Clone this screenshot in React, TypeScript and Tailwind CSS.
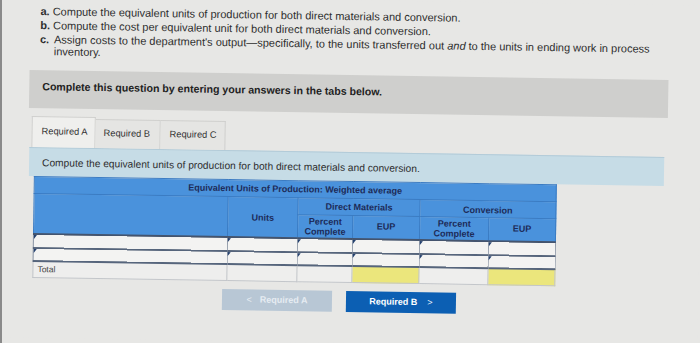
import React from 'react'

const font = { fontFamily: '"Liberation Sans", Arial, sans-serif' }

function Flag() {
  return (
    <span className="absolute left-0 top-0 h-0 w-0 border-t-[4px] border-r-[3px] border-t-[#24406e] border-r-transparent" />
  )
}

function InputCell({ h }: { h: string }) {
  return (
    <td className={`relative ${h} bg-[#f3f3f2] border-x border-[#8893a4] border-y-2 border-y-[#56657c] p-0`}>
      <Flag />
    </td>
  )
}

export default function App() {
  return (
    <div className="w-[700px] h-[343px] overflow-hidden bg-[#e7e7e5] border-l-2 border-[#8a8a8a]">
      {/* the reference is a photo of a screen, tilted slightly */}
      <div
        className="w-[700px] h-[343px] -ml-[2px] rotate-[0.9deg] bg-[#e7e7e5] text-[#2e2e2e]"
        style={font}
      >
        {/* Instructions */}
        <div className="pt-[9px] pl-[38px] text-[11px] leading-[14px]">
          <div>
            <b>a.</b> Compute the equivalent units of production for both direct materials and conversion.
          </div>
          <div>
            <b>b.</b> Compute the cost per equivalent unit for both direct materials and conversion.
          </div>
          <div className="flex leading-[12px] pt-[1px]">
            <b className="w-[14px] shrink-0">c.</b>
            <span className="w-[612px]">
              Assign costs to the department's output—specifically, to the units transferred out <i>and</i> to the units in ending work in process inventory.
            </span>
          </div>
        </div>

        {/* Prompt box */}
        <div className="ml-[28px] mt-[13px] w-[639px] h-[38px] bg-[#cfcfcd] flex items-center pl-[13px] pb-[4px]">
          <span className="text-[10.6px] font-bold text-[#222]">
            Complete this question by entering your answers in the tabs below.
          </span>
        </div>

        {/* Tabs */}
        <div className="ml-[31px] mt-[8px] flex items-end h-[31px] text-[9.3px] text-[#333]">
          <div className="w-[64px] h-[31px] bg-[#efefed] border border-b-0 border-[#d0d0ce] flex items-center pl-[9px]">
            Required A
          </div>
          <div className="w-[65px] h-[29px] bg-[#e5e5e3] border border-b-0 border-l-0 border-[#d0d0ce] flex items-center pl-[8px]">
            Required B
          </div>
          <div className="w-[65px] h-[29px] bg-[#e5e5e3] border border-b-0 border-l-0 border-[#d0d0ce] flex items-center pl-[9px]">
            Required C
          </div>
        </div>

        {/* Sub prompt */}
        <div className="ml-[29px] w-[635px] h-[29px] bg-[#c6dce6] border-t border-[#b3cbd8] flex items-center pl-[13px] pt-[1px]">
          <span className="text-[10.2px] text-[#2e2e2e]">
            Compute the equivalent units of production for both direct materials and conversion.
          </span>
        </div>

        {/* Table */}
        <table className="ml-[34px] border-collapse table-fixed w-[522px] text-[9px] font-bold text-[#1d2b58] border-t border-t-[#dde5ea]">
          <colgroup>
            <col className="w-[194px]" />
            <col className="w-[70px]" />
            <col className="w-[55px]" />
            <col className="w-[67px]" />
            <col className="w-[69px]" />
            <col className="w-[67px]" />
          </colgroup>
          <thead className="bg-[#4a92dc]">
            <tr className="h-[17px]">
              <th colSpan={6} className="border border-[#3b7cc3] text-center font-bold leading-none pt-[1px]">
                Equivalent Units of Production: Weighted average
              </th>
            </tr>
            <tr className="h-[17px]">
              <th rowSpan={2} className="border-l border-b-2 border-[#3b7cc3] border-b-[#44546e]" />
              <th rowSpan={2} className="border-x border-[#3b7cc3] border-b-2 border-b-[#44546e] font-bold pt-[2px]">
                Units
              </th>
              <th colSpan={2} className="border border-[#3b7cc3] font-bold leading-none">
                Direct Materials
              </th>
              <th colSpan={2} className="border border-[#3b7cc3] font-bold leading-none pt-[2px]">
                Conversion
              </th>
            </tr>
            <tr className="h-[23px]">
              <th className="border border-[#3b7cc3] border-b-2 border-b-[#44546e] font-bold leading-[10px]">
                Percent
                <br />
                Complete
              </th>
              <th className="border border-[#3b7cc3] border-b-2 border-b-[#44546e] font-bold">EUP</th>
              <th className="border border-[#3b7cc3] border-b-2 border-b-[#44546e] font-bold leading-[10px]">
                Percent
                <br />
                Complete
              </th>
              <th className="border border-[#3b7cc3] border-b-2 border-b-[#44546e] font-bold">EUP</th>
            </tr>
          </thead>
          <tbody>
            {['h-[14px]', 'h-[13px]'].map((h) => (
              <tr key={h} className={h}>
                <InputCell h={h} />
                <InputCell h={h} />
                <InputCell h={h} />
                <InputCell h={h} />
                <InputCell h={h} />
                <InputCell h={h} />
              </tr>
            ))}
            <tr className="h-[17px]">
              <td className="bg-[#eeeeed] border border-[#c3c6ca] pl-[4px] text-[8.5px] font-normal text-[#444] leading-none">
                Total
              </td>
              <td className="bg-[#eeeeed] border border-[#c3c6ca]" />
              <td className="bg-[#eeeeed] border border-[#c3c6ca]" />
              <td className="bg-[#ebe67c] border border-[#c3c6ca]" />
              <td className="bg-[#eeeeed] border border-[#c3c6ca]" />
              <td className="bg-[#ebe67c] border border-[#c3c6ca]" />
            </tr>
          </tbody>
        </table>

        {/* Nav buttons */}
        <div className="mt-[8px] ml-[224px] flex gap-[14px] text-[9px] font-bold text-white">
          <div className="w-[110px] h-[21px] bg-[#b8c7d5] flex items-center justify-center gap-[8px] text-[#e6ecf2]">
            <span className="font-normal">&lt;</span>
            <span>Required A</span>
          </div>
          <div className="w-[110px] h-[21px] bg-[#0c5fb3] flex items-center justify-center gap-[10px]">
            <span>Required B</span>
            <span className="font-normal">&gt;</span>
          </div>
        </div>
      </div>
    </div>
  )
}
